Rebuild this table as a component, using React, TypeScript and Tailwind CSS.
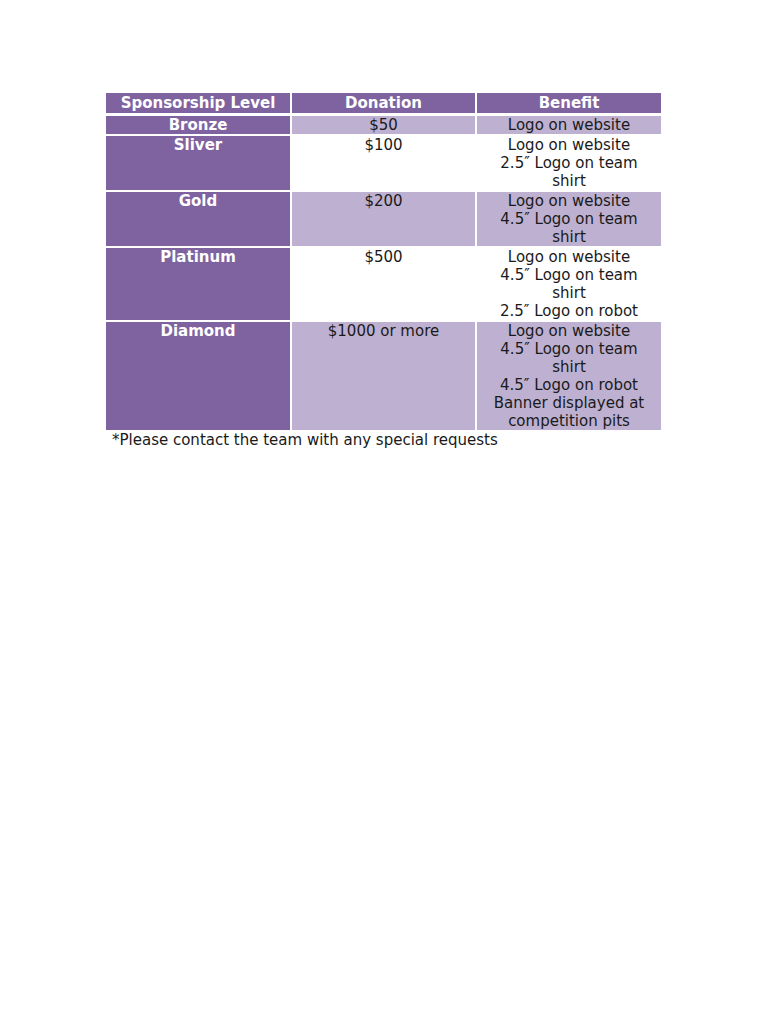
import React from "react";

const dark = "bg-[#7f63a1]";
const light = "bg-[#bdb0d1]";

type Row = { level: string; donation: string; benefits: string[]; shaded: boolean };

const rows: Row[] = [
  { level: "Bronze", donation: "$50", benefits: ["Logo on website"], shaded: true },
  { level: "Sliver", donation: "$100", benefits: ["Logo on website", "2.5\u2033 Logo on team", "shirt"], shaded: false },
  { level: "Gold", donation: "$200", benefits: ["Logo on website", "4.5\u2033 Logo on team", "shirt"], shaded: true },
  {
    level: "Platinum",
    donation: "$500",
    benefits: ["Logo on website", "4.5\u2033 Logo on team", "shirt", "2.5\u2033 Logo on robot"],
    shaded: false,
  },
  {
    level: "Diamond",
    donation: "$1000 or more",
    benefits: [
      "Logo on website",
      "4.5\u2033 Logo on team",
      "shirt",
      "4.5\u2033 Logo on robot",
      "Banner displayed at",
      "competition pits",
    ],
    shaded: true,
  },
];

export default function App() {
  return (
    <div
      className="w-[768px] h-[1024px] bg-white pt-[93px] pl-[106px] text-[15px] leading-[18px] text-[#1a1a1a]"
      style={{ fontFamily: '"DejaVu Sans", Verdana, sans-serif' }}
    >
      <div className="flex flex-col w-[555px]">
        <div className="grid grid-cols-[184px_183px_184px] gap-x-[2px] h-[20px] text-white">
          <div className={`${dark} text-center leading-[20px] font-bold`}>Sponsorship Level</div>
          <div className={`${dark} text-center leading-[20px] font-bold`}>Donation</div>
          <div className={`${dark} text-center leading-[20px] font-bold`}>Benefit</div>
        </div>
        <div className="h-[3px]" />
        {rows.map((r, i) => (
          <div key={r.level} className={`grid grid-cols-[184px_183px_184px] gap-x-[2px] ${i > 0 ? "mt-[2px]" : ""}`}>
            <div className={`${dark} text-center text-white font-bold`}>{r.level}</div>
            <div className={`${r.shaded ? light : "bg-white"} text-center`}>{r.donation}</div>
            <div className={`${r.shaded ? light : "bg-white"} text-center flex flex-col`}>
              {r.benefits.map((b, j) => (
                <span key={j}>{b}</span>
              ))}
            </div>
          </div>
        ))}
        <div className="pl-[6px] pt-[1px]">*Please contact the team with any special requests</div>
      </div>
    </div>
  );
}
